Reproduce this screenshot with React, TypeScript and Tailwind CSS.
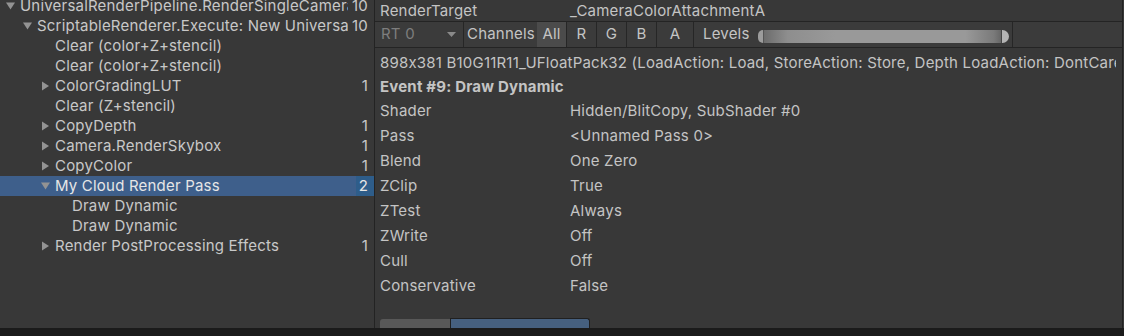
import React from 'react'

type Row = {
  name: string
  depth: number
  fold?: 'open' | 'closed'
  count?: string
  selected?: boolean
}

const rows: Row[] = [
  { name: 'UniversalRenderPipeline.RenderSingleCamera', depth: 0, fold: 'open', count: '10' },
  { name: 'ScriptableRenderer.Execute: New Universal Render Data', depth: 1, fold: 'open', count: '10' },
  { name: 'Clear (color+Z+stencil)', depth: 2 },
  { name: 'Clear (color+Z+stencil)', depth: 2 },
  { name: 'ColorGradingLUT', depth: 2, fold: 'closed', count: '1' },
  { name: 'Clear (Z+stencil)', depth: 2 },
  { name: 'CopyDepth', depth: 2, fold: 'closed', count: '1' },
  { name: 'Camera.RenderSkybox', depth: 2, fold: 'closed', count: '1' },
  { name: 'CopyColor', depth: 2, fold: 'closed', count: '1' },
  { name: 'My Cloud Render Pass', depth: 2, fold: 'open', count: '2', selected: true },
  { name: 'Draw Dynamic', depth: 3 },
  { name: 'Draw Dynamic', depth: 3 },
  { name: 'Render PostProcessing Effects', depth: 2, fold: 'closed', count: '1' }
]

// indentation per depth, written out so tailwind picks them up
const indent = ['pl-[4px]', 'pl-[21px]', 'pl-[39px]', 'pl-[56px]']

const props = [
  ['Shader', 'Hidden/BlitCopy, SubShader #0'],
  ['Pass', '<Unnamed Pass 0>'],
  ['Blend', 'One Zero'],
  ['ZClip', 'True'],
  ['ZTest', 'Always'],
  ['ZWrite', 'Off'],
  ['Cull', 'Off'],
  ['Conservative', 'False']
]

function Foldout({ fold }: { fold?: 'open' | 'closed' }) {
  return (
    <div className="w-[16px] h-[20px] flex items-center shrink-0">
      {fold && (
        <svg width="12" height="12" viewBox="0 0 12 12" className="ml-[1px]">
          {fold === 'open' ? (
            <polygon points="1,2.5 10,2.5 5.5,9.5" fill="#939393" />
          ) : (
            <polygon points="2,1.5 9,6 2,10.5" fill="#939393" />
          )}
        </svg>
      )}
    </div>
  )
}

function EventTree() {
  return (
    <div className="w-[375px] shrink-0 border-r border-[#232323] overflow-hidden">
      <div className="-mt-[4px]">
        {rows.map((row, i) => (
          <div
            key={i}
            className={`flex h-[20px] items-center ${
              row.selected ? 'bg-[#3e5f8b] text-[#e6e6e6]' : 'text-[#c8c8c8]'
            }`}
          >
            <div className={`flex flex-1 min-w-0 items-center overflow-hidden ${indent[row.depth]}`}>
              <Foldout fold={row.fold} />
              <span className="whitespace-nowrap">{row.name}</span>
            </div>
            <div
              className={`w-[26px] h-[20px] shrink-0 flex items-center justify-end pr-[6px] whitespace-nowrap ${
                row.selected ? 'bg-[linear-gradient(to_right,#3e5f8b_8px,#2e5d8a_8px)]' : ''
              }`}
            >
              {row.count}
            </div>
          </div>
        ))}
      </div>
    </div>
  )
}

function LevelsSlider() {
  return (
    <div className="flex w-[251px] h-[13px] mt-[3px] shrink-0">
      <div className="w-[5px] rounded-l-full bg-[#9c9c9c]" />
      <div className="w-[1px] bg-[#555555]" />
      <div className="flex-1 bg-[linear-gradient(to_right,#6c6c6c,#8e8e8e_10%,#999999_30%,#999999_85%,#7a7a7a_97%,#666666)]" />
      <div className="w-[1px] bg-[#444444]" />
      <div className="w-[7px] rounded-r-full bg-[#b4b4b4]" />
    </div>
  )
}

function Toolbar() {
  const channels = [
    { label: 'All', cls: 'w-[30px] bg-[#4b4b4b]' },
    { label: 'R', cls: 'w-[30px]' },
    { label: 'G', cls: 'w-[30px]' },
    { label: 'B', cls: 'w-[30px]' },
    { label: 'A', cls: 'w-[37px]' }
  ]
  return (
    <div className="flex h-[26px] bg-[#3b3b3b] border-b border-[#242424] text-[#c4c4c4]">
      <div className="w-[89px] flex items-center justify-between pl-[6px] pr-[7px] border-r border-[#262626] text-[#7e7e7e]">
        <span>RT 0</span>
        <svg width="9" height="5" viewBox="0 0 9 5">
          <polygon points="0,0 9,0 4.5,5" fill="#8a8a8a" />
        </svg>
      </div>
      <div className="w-[73px] flex items-center pl-[3px]">Channels</div>
      {channels.map((c) => (
        <div
          key={c.label}
          className={`flex items-center justify-center border-r border-[#262626] ${c.cls}`}
        >
          {c.label}
        </div>
      ))}
      <div className="w-[64px] flex items-center pl-[9px]">Levels</div>
      <div className="flex items-center">
        <LevelsSlider />
      </div>
      <div className="w-[4px] border-r border-[#262626]" />
    </div>
  )
}

function EventDetails() {
  return (
    <div className="flex-1 flex flex-col mr-[1px] border-r border-[#232323] text-[#c4c4c4] overflow-hidden">
      <div className="flex h-[22px] items-center border-b border-[#242424] pl-[5px] pt-[1px]">
        <span className="w-[190px]">RenderTarget</span>
        <span>_CameraColorAttachmentA</span>
      </div>
      <Toolbar />
      <div className="pt-[3px] pl-[5px] pr-[6px]">
        <div className="h-[25px] flex items-center whitespace-nowrap overflow-hidden">
          898x381 B10G11R11_UFloatPack32 (LoadAction: Load, StoreAction: Store, Depth LoadAction: DontCare)
        </div>
        <div className="h-[23px] flex items-center font-bold">Event #9: Draw Dynamic</div>
        {props.map(([k, v]) => (
          <div key={k} className="h-[25px] flex items-center">
            <span className="w-[190px]">{k}</span>
            <span>{v}</span>
          </div>
        ))}
      </div>
      <div className="flex mt-[19px] pl-[5px] h-[10px] items-end">
        <div className="w-[70px] h-[9px] bg-[#585858] rounded-tl-[3px]" />
        <div className="w-[140px] h-[10px] bg-[#46607f] border border-b-0 border-[#202020] rounded-tr-[3px]" />
      </div>
    </div>
  )
}

export default function App() {
  return (
    <div
      className="w-[1124px] h-[336px] flex flex-col bg-[#383838] text-[15px] tracking-[0.2px] overflow-hidden"
      style={{ fontFamily: 'Inter, "Noto Sans", sans-serif' }}
    >
      <div className="flex h-[328px] overflow-hidden">
        <EventTree />
        <EventDetails />
      </div>
      <div className="h-[8px] bg-[#1b1b1b]" />
    </div>
  )
}
